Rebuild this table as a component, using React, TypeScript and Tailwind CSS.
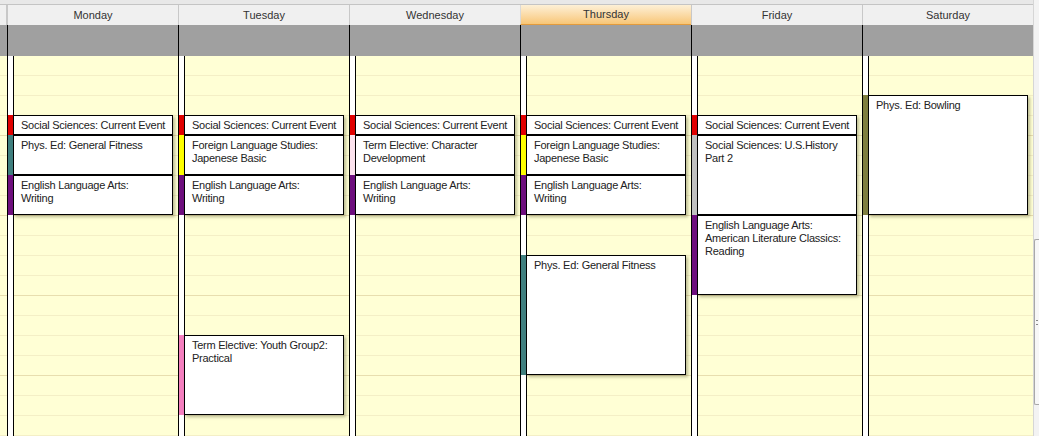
type CalEvent = {
  title: string[];
  bar: string;
  slot: number;
  span: number;
};

type Day = {
  name: string;
  today?: boolean;
  events: CalEvent[];
};

const social: CalEvent = { title: ['Social Sciences: Current Event'], bar: 'bg-[#e00000]', slot: 2, span: 1 };
const english: CalEvent = { title: ['English Language Arts:', 'Writing'], bar: 'bg-[#6e0f7e]', slot: 5, span: 2 };
const japanese: CalEvent = { title: ['Foreign Language Studies:', 'Japenese Basic'], bar: 'bg-[#ffff00]', slot: 3, span: 2 };

const days: Day[] = [
  {
    name: 'Monday',
    events: [
      social,
      { title: ['Phys. Ed: General Fitness'], bar: 'bg-[#3f7f7f]', slot: 3, span: 2 },
      english,
    ],
  },
  {
    name: 'Tuesday',
    events: [
      social,
      japanese,
      english,
      { title: ['Term Elective: Youth Group2:', 'Practical'], bar: 'bg-[#f47fbf]', slot: 13, span: 4 },
    ],
  },
  {
    name: 'Wednesday',
    events: [
      social,
      { title: ['Term Elective: Character', 'Development'], bar: 'bg-[#fde3ef]', slot: 3, span: 2 },
      english,
    ],
  },
  {
    name: 'Thursday',
    today: true,
    events: [
      social,
      japanese,
      english,
      { title: ['Phys. Ed: General Fitness'], bar: 'bg-[#3f7f7f]', slot: 9, span: 6 },
    ],
  },
  {
    name: 'Friday',
    events: [
      social,
      { title: ['Social Sciences: U.S.History', 'Part 2'], bar: 'bg-[#c0c0c0]', slot: 3, span: 4 },
      {
        title: ['English Language Arts:', 'American Literature Classics:', 'Reading'],
        bar: 'bg-[#6e0f7e]',
        slot: 7,
        span: 4,
      },
    ],
  },
  {
    name: 'Saturday',
    events: [{ title: ['Phys. Ed: Bowling'], bar: 'bg-[#7f7f3f]', slot: 1, span: 6 }],
  },
];

const slots = Array.from({ length: 19 }, (_, i) => i);

function Slots() {
  return (
    <div className="flex flex-1 flex-col">
      {slots.map((i) => (
        <div
          key={i}
          className={`h-[20px] shrink-0 border-b ${i % 4 === 3 ? 'border-[#e8deaf]' : 'border-[#f4efc6]'}`}
        />
      ))}
    </div>
  );
}

function EventBox({ ev }: { ev: CalEvent }) {
  return (
    <div
      className="absolute left-[1px] z-20 flex w-[165px]"
      style={{ top: 19 + ev.slot * 20, height: ev.span * 20 }}
    >
      <div className={`w-[5px] shrink-0 ${ev.bar}`} />
      <div className="flex-1 overflow-hidden border border-black bg-white pl-[7px] pt-[3px] text-[11px] leading-[13px] tracking-[-0.25px] text-[#222] shadow-[2px_2px_3px_rgba(60,60,20,0.35)]">
        {ev.title.map((line) => (
          <div key={line} className="whitespace-nowrap">
            {line}
          </div>
        ))}
      </div>
    </div>
  );
}

function DayColumn({ day }: { day: Day }) {
  return (
    <div className="flex w-[171px] shrink-0 flex-col">
      {day.today ? (
        <div className="h-[20px] border-b border-l border-b-[#e39b3c] border-l-[#d9d9d9] bg-linear-to-b from-[#fdf0d6] to-[#f8c676] text-center text-[11px] leading-[19px] text-[#333]">
          {day.name}
        </div>
      ) : (
        <div className="h-[20px] border-l border-[#c8c8c8] bg-[#f0f0f0] text-center text-[11px] leading-[20px] text-[#333]">
          {day.name}
        </div>
      )}
      <div className="h-[31px] border-l border-black bg-[#a0a0a0]" />
      <div className="relative flex flex-1 bg-[#ffffd5]">
        <div className="w-[7px] shrink-0 border-x border-black bg-white" />
        <Slots />
        {day.events.map((ev) => (
          <EventBox key={ev.title.join() + ev.slot} ev={ev} />
        ))}
      </div>
    </div>
  );
}

export default function App() {
  return (
    <div className="flex h-[436px] w-[1039px] overflow-hidden bg-[#ececec] font-['Liberation_Sans',Arial,sans-serif]">
      <div className="flex w-[1033px] shrink-0 flex-col">
        <div className="h-[5px] shrink-0 border-b border-[#c4c4c4] bg-[#e8e8e8]" />
        <div className="flex flex-1">
          <div className="flex w-[7px] shrink-0 flex-col">
            <div className="h-[20px] border-r border-[#c8c8c8] bg-[#f0f0f0]" />
            <div className="h-[31px] bg-[#a0a0a0]" />
            <div className="flex flex-1 bg-[#ffffd5]">
              <Slots />
            </div>
          </div>
          {days.map((d) => (
            <DayColumn key={d.name} day={d} />
          ))}
        </div>
      </div>
      <div className="flex w-[6px] flex-col border-l border-[#d6d6d6] bg-[#f3f3f3] pt-[239px]">
        <div className="flex h-[166px] items-center justify-center rounded-l-[2px] border border-r-0 border-[#a8a8a8] bg-[#f7f7f7]">
          <div className="h-[5px] w-[2px] border-y border-[#888]" />
        </div>
      </div>
    </div>
  );
}
